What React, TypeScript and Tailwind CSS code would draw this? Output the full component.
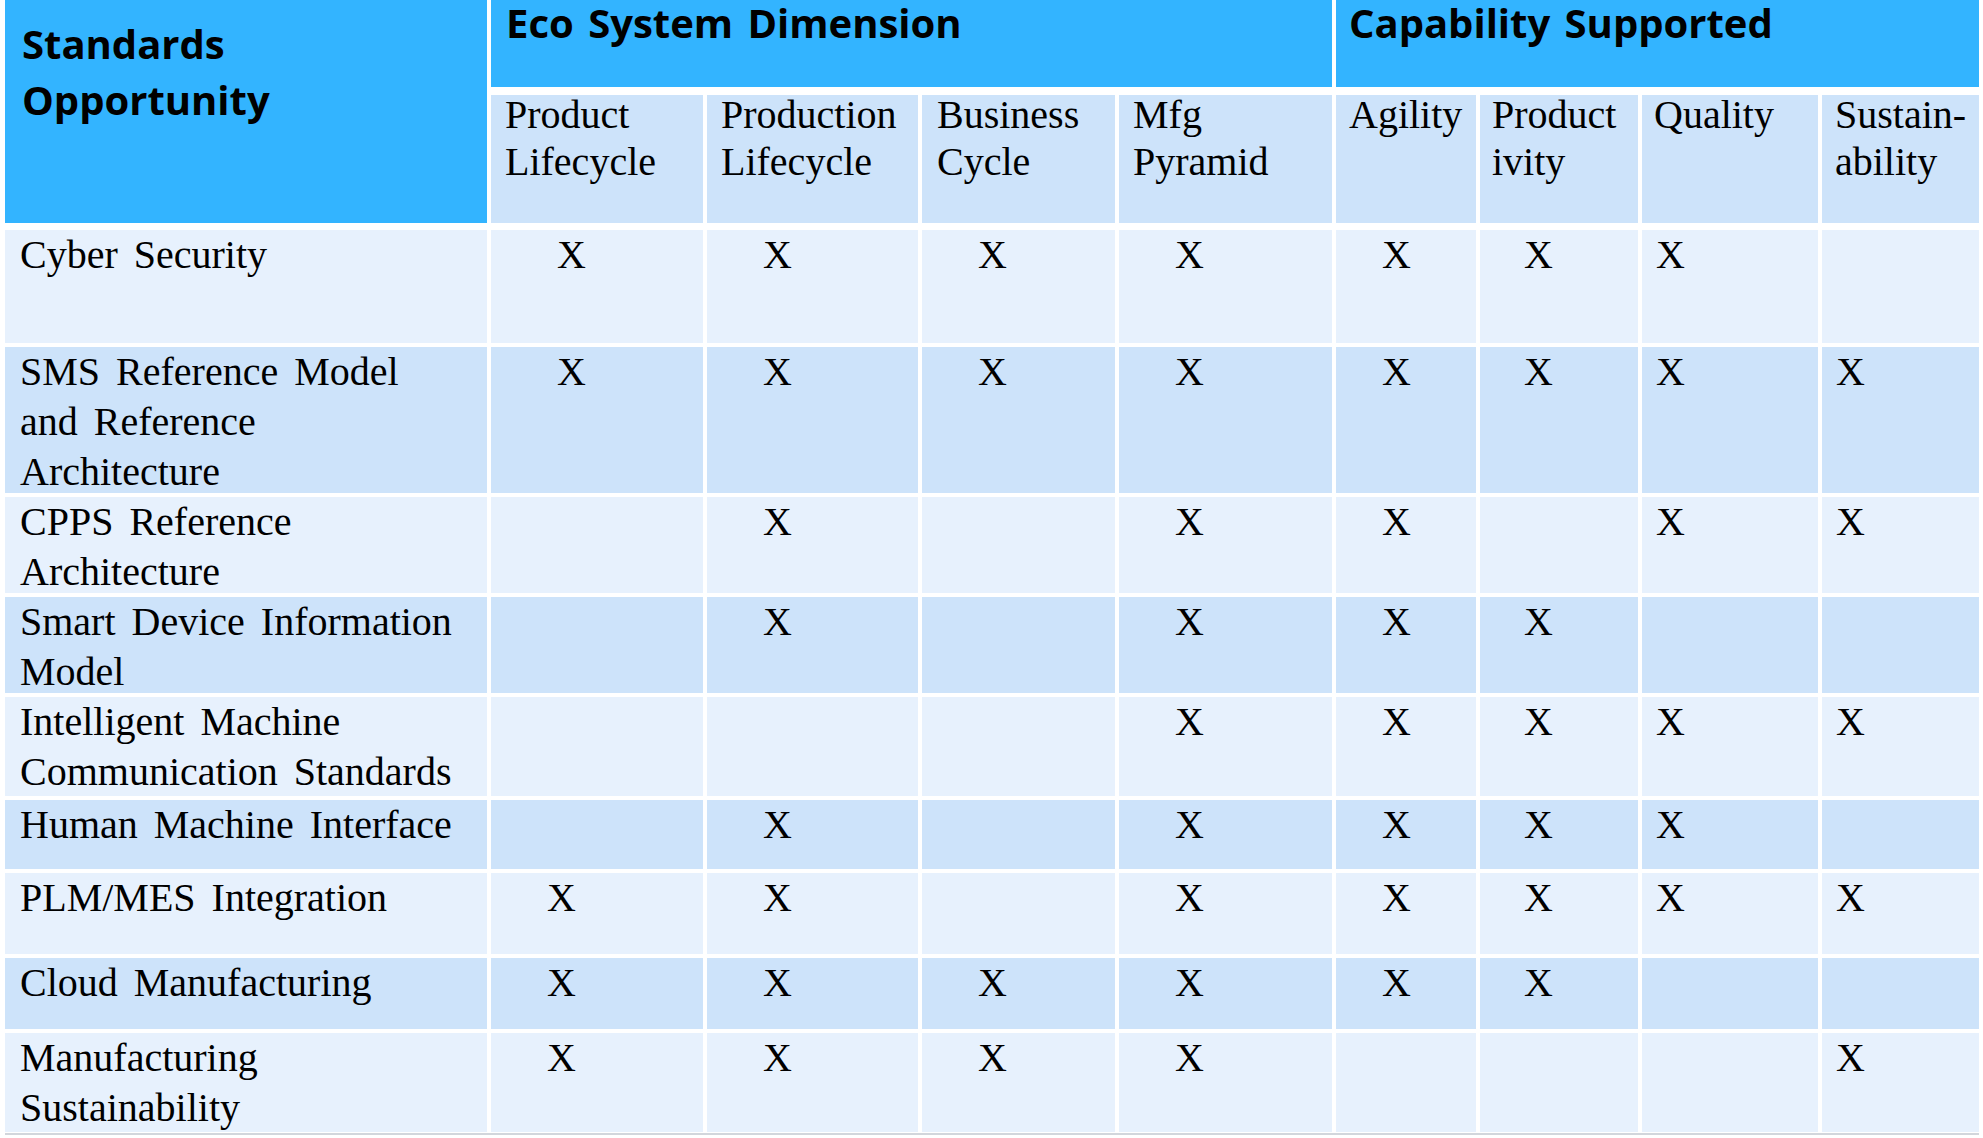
import React from "react";

const serif = "font-['Liberation_Serif','Times_New_Roman',serif]";
const sans = "font-['Open_Sans','Noto_Sans',sans-serif]";

const rows: { label: string[]; marks: number[] }[] = [
  { label: ["Cyber Security"], marks: [1, 1, 1, 1, 1, 1, 1, 0] },
  { label: ["SMS Reference Model", "and Reference", "Architecture"], marks: [1, 1, 1, 1, 1, 1, 1, 1] },
  { label: ["CPPS Reference", "Architecture"], marks: [0, 1, 0, 1, 1, 0, 1, 1] },
  { label: ["Smart Device Information", "Model"], marks: [0, 1, 0, 1, 1, 1, 0, 0] },
  { label: ["Intelligent Machine", "Communication Standards"], marks: [0, 0, 0, 1, 1, 1, 1, 1] },
  { label: ["Human Machine Interface"], marks: [0, 1, 0, 1, 1, 1, 1, 0] },
  { label: ["PLM/MES Integration"], marks: [1, 1, 0, 1, 1, 1, 1, 1] },
  { label: ["Cloud Manufacturing"], marks: [1, 1, 1, 1, 1, 1, 0, 0] },
  { label: ["Manufacturing", "Sustainability"], marks: [1, 1, 1, 1, 0, 0, 0, 1] },
];

const subHeads: { lines: string[]; pl: string }[] = [
  { lines: ["Product", "Lifecycle"], pl: "pl-[14px]" },
  { lines: ["Production", "Lifecycle"], pl: "pl-[14px]" },
  { lines: ["Business", "Cycle"], pl: "pl-[15px]" },
  { lines: ["Mfg", "Pyramid"], pl: "pl-[14px]" },
  { lines: ["Agility"], pl: "pl-[13px]" },
  { lines: ["Product", "ivity"], pl: "pl-[12px]" },
  { lines: ["Quality"], pl: "pl-[12px]" },
  { lines: ["Sustain-", "ability"], pl: "pl-[13px]" },
];

const xOffsets = [
  "pl-[56px]",
  "pl-[56px]",
  "pl-[56px]",
  "pl-[56px]",
  "pl-[46px]",
  "pl-[44px]",
  "pl-[14px]",
  "pl-[14px]",
];

const gridCols =
  "grid grid-cols-[482px_212px_211px_193px_213px_140px_158px_176px_157px] gap-x-[4px]";

export default function App() {
  return (
    <div className="w-[1983px] h-[1138px] bg-white overflow-hidden pl-[5px] text-black">
      {/* Header */}
      <div className={`${gridCols} grid-rows-[87px_128px] gap-y-[8px]`}>
        <div
          className={`row-span-2 bg-[#33b4ff] pl-[17px] pt-[16px] ${sans} font-bold text-[40px] leading-[56px]`}
        >
          <div>Standards</div>
          <div>Opportunity</div>
        </div>
        <div
          className={`col-span-4 bg-[#33b4ff] pl-[15px] ${sans} font-bold text-[40px] leading-[46px] whitespace-nowrap [word-spacing:4px]`}
        >
          Eco System Dimension
        </div>
        <div
          className={`col-span-4 bg-[#33b4ff] pl-[13px] ${sans} font-bold text-[40px] leading-[46px] whitespace-nowrap [word-spacing:4px]`}
        >
          Capability Supported
        </div>
        {subHeads.map((s, i) => (
          <div
            key={i}
            className={`bg-[#cde3fa] ${s.pl} ${serif} text-[40px] leading-[47px] whitespace-nowrap`}
          >
            <div className="-mt-[4px]">
              {s.lines.map((l, j) => (
                <div key={j}>{l}</div>
              ))}
            </div>
          </div>
        ))}
      </div>

      {/* Body */}
      <div
        className={`${gridCols} mt-[7px] gap-y-[4px] grid-rows-[113px_146px_96px_96px_99px_69px_81px_71px_99px]`}
      >
        {rows.map((r, ri) => {
          const bg = ri % 2 === 0 ? "bg-[#e7f1fd]" : "bg-[#cde3fa]";
          return (
            <React.Fragment key={ri}>
              <div
                className={`${bg} pl-[15px] ${serif} text-[40px] leading-[50px] whitespace-nowrap [word-spacing:6px]`}
              >
                {r.label.map((l, j) => (
                  <div key={j}>{l}</div>
                ))}
              </div>
              {r.marks.map((m, ci) => {
                const pl =
                  ci === 0 ? (ri <= 1 ? "pl-[66px]" : "pl-[56px]") : xOffsets[ci];
                return (
                  <div
                    key={ci}
                    className={`${bg} ${pl} ${serif} text-[40px] leading-[50px]`}
                  >
                    {m ? "X" : ""}
                  </div>
                );
              })}
            </React.Fragment>
          );
        })}
      </div>
      <div className="mt-[1px] h-[2px] w-[1974px] bg-[#d2d6dc]" />
    </div>
  );
}
